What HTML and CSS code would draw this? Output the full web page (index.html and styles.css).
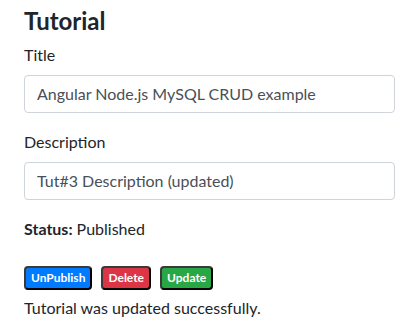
FILE: index.html
```html
<!DOCTYPE html>
<html>
<head>
<meta charset="utf-8">
<link rel="stylesheet" href="styles.css">
</head>
<body>
<div class="edit-form">
  <h4 class="heading">Tutorial</h4>
  <form>
    <div class="form-group">
      <label for="title">Title</label>
      <input type="text" class="form-control" id="title" value="Angular Node.js MySQL CRUD example">
    </div>
    <div class="form-group">
      <label for="description">Description</label>
      <input type="text" class="form-control" id="description" value="Tut#3 Description (updated)">
    </div>
    <div class="form-group status">
      <strong>Status:</strong> Published
    </div>
  </form>
  <div class="actions">
    <button class="badge badge-primary">UnPublish</button>
    <button class="badge badge-danger">Delete</button>
    <button class="badge badge-success">Update</button>
  </div>
  <p class="message">Tutorial was updated successfully.</p>
</div>
</body>
</html>
```
FILE: styles.css
```css
html, body {
  margin: 0;
  background: #fff;
}
body {
  font-family: "Lato", "Open Sans", sans-serif;
  font-size: 16px;
  line-height: 1.5;
  color: #212529;
}
.edit-form {
  width: 371px;
  padding: 7px 0 0 24px;
}
.heading {
  margin: 0 0 7px;
  font-size: 24px;
  font-weight: 700;
  line-height: 1.2;
}
.form-group {
  margin-bottom: 17px;
}
label {
  display: block;
  margin-bottom: 8px;
}
.form-control {
  display: block;
  box-sizing: border-box;
  width: 100%;
  height: 38px;
  padding: 6px 12px;
  font-family: inherit;
  font-size: 16px;
  line-height: 1.5;
  color: #495057;
  background: #fff;
  border: 1px solid #ced4da;
  border-radius: 4px;
  margin: 0;
}
.status {
  margin-top: 17px;
  margin-bottom: 25px;
}
.actions {
  display: flex;
  gap: 9px;
}
.badge {
  display: inline-block;
  padding: 4px 5px;
  font-family: inherit;
  font-size: 12px;
  font-weight: 700;
  line-height: 1;
  color: #fff;
  border: 2px outset #3a3a3a;
  border-radius: 4px;
  margin: 0;
}
.badge-primary { background: #007bff; }
.badge-danger { background: #dc3545; }
.badge-success { background: #28a745; }
.message {
  margin: 6px 0 0;
}
```
